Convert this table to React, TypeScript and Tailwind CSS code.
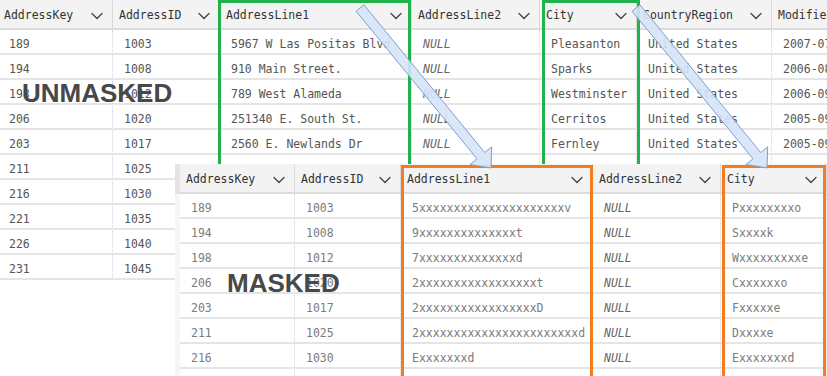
import React from 'react';
import { ChevronDown } from 'lucide-react';

type Col = { name: string; w: string; first?: boolean; cells: string[] };

const pad = (arr: string[], n: number) => [...arr, ...Array(Math.max(0, n - arr.length)).fill('')];
const nulls = (n: number) => Array(n).fill('NULL');

// top (unmasked) grid
const topCols: Col[] = [
  { name: 'AddressKey', w: 'w-[113px]', first: true, cells: ['189', '194', '198', '206', '203', '211', '216', '221', '226', '231'] },
  { name: 'AddressID', w: 'w-[107px]', cells: ['1003', '1008', '1012', '1020', '1017', '1025', '1030', '1035', '1040', '1045'] },
  { name: 'AddressLine1', w: 'w-[192px]', cells: pad(['5967 W Las Positas Blvd', '910 Main Street.', '789 West Alameda', '251340 E. South St.', '2560 E. Newlands Dr'], 10) },
  { name: 'AddressLine2', w: 'w-[128px]', cells: pad(nulls(5), 10) },
  { name: 'City', w: 'w-[97px]', cells: pad(['Pleasanton', 'Sparks', 'Westminster', 'Cerritos', 'Fernley'], 10) },
  { name: 'CountryRegion', w: 'w-[135px]', cells: pad(Array(5).fill('United States'), 10) },
  { name: 'ModifiedDate', w: 'w-[100px]', cells: pad(['2007-07-01', '2006-08-01', '2006-09-01', '2005-09-01', '2005-09-01'], 10) },
];

// bottom (masked) grid
const maskedCols: Col[] = [
  { name: 'AddressKey', w: 'w-[115px]', cells: pad(['189', '194', '198', '206', '203', '211', '216'], 8) },
  { name: 'AddressID', w: 'w-[106px]', cells: pad(['1003', '1008', '1012', '1020', '1017', '1025', '1030'], 8) },
  {
    name: 'AddressLine1',
    w: 'w-[192px]',
    cells: pad(
      [
        '5xxxxxxxxxxxxxxxxxxxxxv',
        '9xxxxxxxxxxxxxxt',
        '7xxxxxxxxxxxxxxd',
        '2xxxxxxxxxxxxxxxxxt',
        '2xxxxxxxxxxxxxxxxxD',
        '2xxxxxxxxxxxxxxxxxxxxxxxd',
        'Exxxxxxxd',
      ],
      8,
    ),
  },
  { name: 'AddressLine2', w: 'w-[128px]', cells: pad(nulls(7), 8) },
  { name: 'City', w: 'w-[106px]', cells: pad(['Pxxxxxxxxo', 'Sxxxxk', 'Wxxxxxxxxxe', 'Cxxxxxxo', 'Fxxxxxe', 'Dxxxxe', 'Exxxxxxxd'], 8) },
];

const Column = ({ col, masked }: { col: Col; masked?: boolean }) => (
  <div className={`${col.w} shrink-0 flex flex-col overflow-hidden`}>
    <div
      className={`h-[30px] flex items-center justify-between pt-[3px] pr-[5px] bg-[#f3f3f3] border-b-2 border-r border-b-[#dcdcdc] border-r-[#d9d9d9] ${
        col.first ? 'pl-[4px]' : 'pl-[6px]'
      }`}
    >
      <span className="whitespace-nowrap text-[#333]">{col.name}</span>
      <ChevronDown size={20} strokeWidth={1.5} className="shrink-0 text-[#444]" />
    </div>
    <div className="border-r border-dotted border-[#d2d2d2]">
      {col.cells.map((c, i) => (
        <div
          key={i}
          className={`h-[25px] flex items-center pt-[7px] border-b-2 border-[#e5e5e5] whitespace-nowrap overflow-hidden ${
            col.first ? 'pl-[9px]' : 'pl-[11px]'
          } ${c === 'NULL' ? 'italic text-[#666]' : masked ? 'text-[#7c7c7c]' : 'text-[#555]'}`}
        >
          {c}
        </div>
      ))}
    </div>
  </div>
);

// big block arrow: tail centre -> tip
const arrow = (tx: number, ty: number, px: number, py: number, w = 5, h = 14, L = 16) => {
  const dx = px - tx;
  const dy = py - ty;
  const len = Math.hypot(dx, dy);
  const ux = dx / len;
  const uy = dy / len;
  const nx = -uy;
  const ny = ux;
  const bx = px - L * ux;
  const by = py - L * uy;
  const pts = [
    [tx + w * nx, ty + w * ny],
    [bx + w * nx, by + w * ny],
    [bx + h * nx, by + h * ny],
    [px, py],
    [bx - h * nx, by - h * ny],
    [bx - w * nx, by - w * ny],
    [tx - w * nx, ty - w * ny],
  ];
  return pts.map((p) => p.map((v) => v.toFixed(1)).join(',')).join(' ');
};

export default function App() {
  return (
    <div className="relative w-[827px] h-[376px] overflow-hidden bg-white font-['DejaVu_Sans_Mono',monospace] text-[11.5px]">
      {/* unmasked grid */}
      <div className="flex">
        {topCols.map((c) => (
          <Column key={c.name} col={c} />
        ))}
      </div>

      {/* green highlight */}
      <div className="absolute left-[218px] top-0 w-[193px] h-[190px] border-[3px] border-[#22b14c]" />
      <div className="absolute left-[542px] top-0 w-[98px] h-[190px] border-[3px] border-[#22b14c]" />

      {/* masked grid */}
      <div className="absolute left-[175px] top-[164px] flex bg-white">
        <div className="w-[5px] shrink-0 flex flex-col">
          <div className="h-[30px] bg-[#e4e4e4]" />
          <div className="flex-1 bg-[#f6f6f6]" />
        </div>
        {maskedCols.map((c) => (
          <Column key={c.name} col={c} masked />
        ))}
      </div>

      {/* orange highlight */}
      <div className="absolute left-[401px] top-[165px] w-[192px] h-[230px] border-[3px] border-[#f47c20]" />
      <div className="absolute left-[722px] top-[165px] w-[104px] h-[230px] border-[3px] border-[#f47c20]" />

      <div className="absolute left-[22px] top-[80px] font-['Liberation_Sans',Arial,sans-serif] font-bold text-[26px] leading-none text-[#484848]">
        UNMASKED
      </div>
      <div className="absolute left-[227px] top-[270px] font-['Liberation_Sans',Arial,sans-serif] font-bold text-[26px] leading-none text-[#484848]">
        MASKED
      </div>

      <svg className="absolute inset-0 pointer-events-none" width="827" height="376" viewBox="0 0 827 376">
        <polygon points={arrow(360, 8, 491, 168)} fill="#d6e4f8" fillOpacity={0.9} stroke="#7f9fd0" strokeWidth={1} />
        <polygon points={arrow(636, 8, 767, 168)} fill="#d6e4f8" fillOpacity={0.9} stroke="#7f9fd0" strokeWidth={1} />
      </svg>
    </div>
  );
}
